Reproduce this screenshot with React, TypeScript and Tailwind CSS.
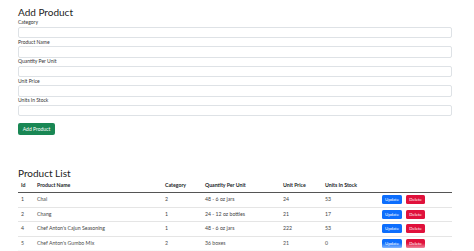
import React from "react";

const fields = ["Category", "Product Name", "Quantity Per Unit", "Unit Price", "Units In Stock"];

const rows = [
  { id: 1, name: "Chai", cat: 2, qty: "48 - 6 oz jars", price: 24, stock: 53 },
  { id: 2, name: "Chang", cat: 1, qty: "24 - 12 oz bottles", price: 21, stock: 17 },
  { id: 4, name: "Chef Anton's Cajun Seasoning", cat: 1, qty: "48 - 6 oz jars", price: 222, stock: 53 },
  { id: 5, name: "Chef Anton's Gumbo Mix", cat: 2, qty: "36 boxes", price: 21, stock: 0 },
];

export default function App() {
  return (
    <div
      className="relative w-[474px] h-[251px] overflow-hidden bg-white text-[#212529] leading-none"
      style={{ fontFamily: "Lato, 'Noto Sans', sans-serif" }}
    >
      <div className="pl-[18px] pr-[22px] pt-[6px]">
        <h1 className="text-[10px] leading-[13px] font-normal text-[#222]">Add Product</h1>
        <div className="flex flex-col">
          {fields.map((f) => (
            <div key={f} className="flex flex-col mb-[0.5px]">
              <label className="text-[5px] leading-[7.5px] text-[#333]">{f}</label>
              <div className="h-[11.5px] border border-[#dee2e6] rounded-[2px] bg-white" />
            </div>
          ))}
        </div>
        <button className="block mt-[6px] h-[12px] w-[37px] rounded-[2px] bg-[#198754] text-white text-[5px] leading-[12px]">
          Add Product
        </button>
        <h2 className="mt-[31px] text-[10px] leading-[14px] font-normal text-[#222]">Product List</h2>
        <table className="w-full table-fixed border-collapse text-[5.2px] leading-[7px]">
          <colgroup>
            <col className="w-[16px]" />
            <col className="w-[128px]" />
            <col className="w-[40px]" />
            <col className="w-[78px]" />
            <col className="w-[42px]" />
            <col className="w-[57px]" />
            <col />
          </colgroup>
          <thead>
            <tr className="h-[13px] border-b-[1.5px] border-[#555]">
              <th className="text-left font-bold px-[3px]">Id</th>
              <th className="text-left font-bold px-[3px]">Product Name</th>
              <th className="text-left font-bold px-[3px]">Category</th>
              <th className="text-left font-bold px-[3px]">Quantity Per Unit</th>
              <th className="text-left font-bold px-[3px]">Unit Price</th>
              <th className="text-left font-bold px-[3px]">Units In Stock</th>
              <th className="px-[3px]"></th>
            </tr>
          </thead>
          <tbody className="text-[#444]">
            {rows.map((r) => (
              <tr key={r.id} className="h-[14.5px] border-b border-[#e5e5e5]">
                <td className="px-[3px]">{r.id}</td>
                <td className="px-[3px]">{r.name}</td>
                <td className="px-[3px]">{r.cat}</td>
                <td className="px-[3px]">{r.qty}</td>
                <td className="px-[3px]">{r.price}</td>
                <td className="px-[3px]">{r.stock}</td>
                <td className="px-[3px]">
                  <div className="flex gap-[4px]">
                    <button className="h-[9px] w-[20px] rounded-[1.5px] bg-[#0d6efd] text-white text-[4.3px] leading-[9px]">
                      Update
                    </button>
                    <button className="h-[9px] w-[19px] rounded-[1.5px] bg-[#e0113c] text-white text-[4.3px] leading-[9px]">
                      Delete
                    </button>
                  </div>
                </td>
              </tr>
            ))}
          </tbody>
        </table>
      </div>
      <div className="absolute left-0 right-0 bottom-0 h-[8px] bg-gradient-to-b from-transparent to-white/80" />
    </div>
  );
}
